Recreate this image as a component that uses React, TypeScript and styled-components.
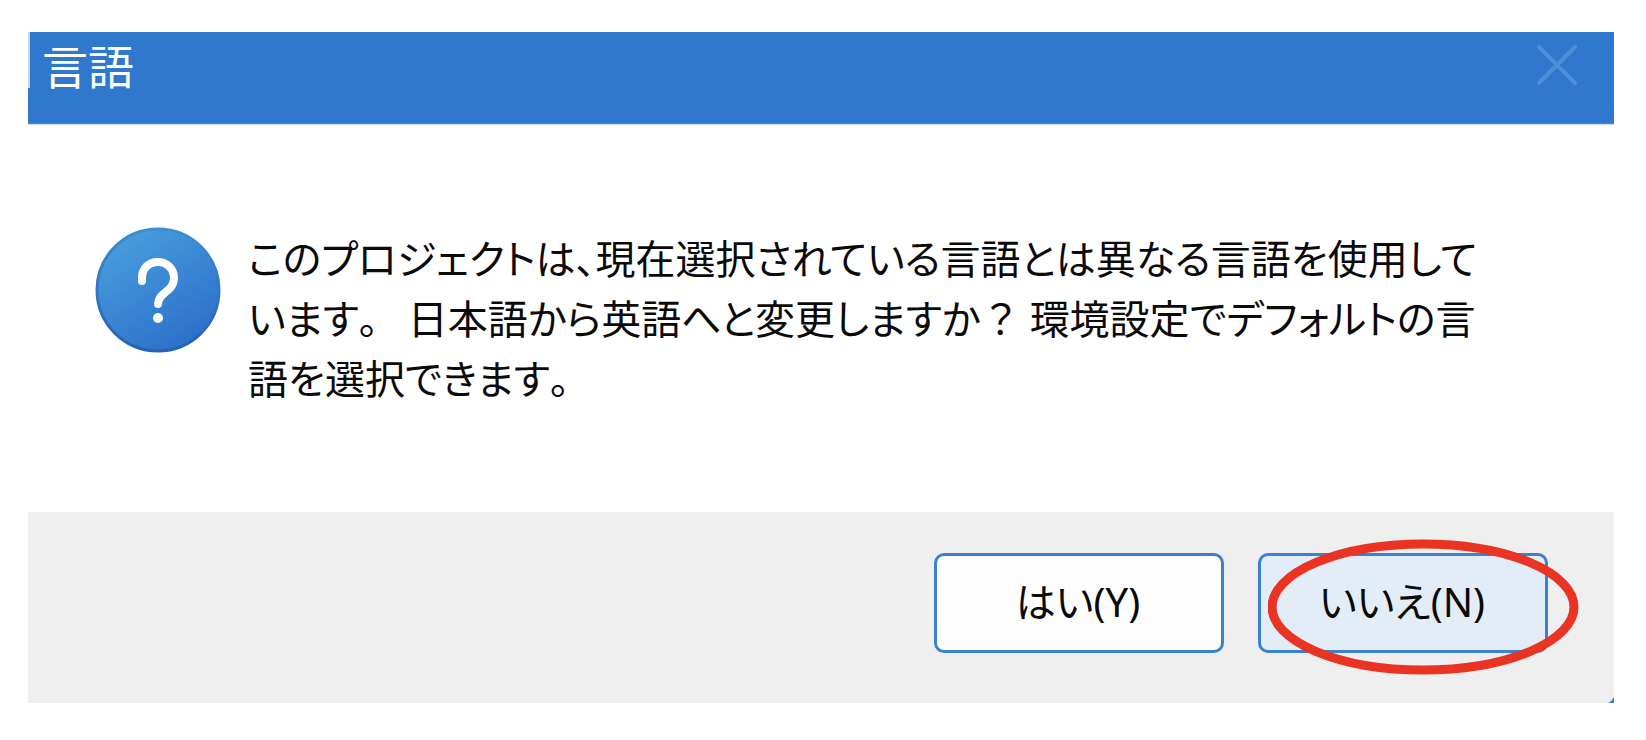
import React from "react";
import styled, { createGlobalStyle } from "styled-components";

const GlobalStyle = createGlobalStyle`
  * { box-sizing: border-box; }
  body {
    margin: 0;
    background: #ffffff;
    color: #0a0a0a;
    font-family: "Noto Sans CJK JP", sans-serif;
    font-feature-settings: "palt";
  }
`;

const Page = styled.main`
  padding: 32px 32px 36px 28px;
`;

const Dialog = styled.section`
  display: flex;
  flex-direction: column;
  background: #ffffff;
`;

const TitleBar = styled.header`
  position: relative;
  display: flex;
  justify-content: space-between;
  align-items: flex-start;
  height: 92px;
  padding: 0 32px 0 14px;
  background: #3078ce;
  border-bottom: 1px solid #4585d2;
  box-shadow: 0 1px 0 #c8def4;

  &::before {
    content: "";
    position: absolute;
    left: 0;
    top: 0;
    width: 2px;
    height: 56px;
    background: #c3daf3;
  }
`;

const Title = styled.h1`
  margin: 0;
  font-size: 46px;
  line-height: 64px;
  font-weight: 400;
  color: #ffffff;
`;

const CloseButton = styled.button`
  display: flex;
  padding: 8px 0 0;
  border: 0;
  background: none;
  cursor: pointer;
`;

const Content = styled.div`
  display: flex;
  align-items: flex-start;
  gap: 27px;
  padding: 103px 100px 105px 67px;
`;

const IconSlot = styled.div`
  flex: none;
  display: flex;
`;

const Message = styled.p`
  margin: 0;
  font-size: 40px;
  line-height: 60px;
  white-space: nowrap;
`;

const FullWidth = styled.span`
  font-feature-settings: normal;
`;

const Footer = styled.footer`
  position: relative;
  display: flex;
  justify-content: flex-end;
  gap: 34px;
  padding: 41px 66px 50px;
  background: #efefef;
`;

const Slot = styled.div`
  position: relative;
  display: flex;
`;

const Choice = styled.button<{ $active?: boolean }>`
  width: 290px;
  height: 100px;
  padding: 0 2px 2px 0;
  border: 3px solid #3a82cf;
  border-radius: 10px;
  background: ${(p) => (p.$active ? "#e3edf7" : "#fdfdfd")};
  color: inherit;
  font-family: "Noto Sans", "Noto Sans CJK JP", sans-serif;
  font-feature-settings: "palt";
  font-size: 40px;
  line-height: 60px;
  cursor: pointer;
`;

const Marker = styled.svg`
  position: absolute;
  left: 10px;
  top: -14px;
  pointer-events: none;
`;

const Corner = styled.svg`
  position: absolute;
  right: 0;
  bottom: 0;
`;

export default function App() {
  return (
    <>
      <GlobalStyle />
      <Page>
        <Dialog role="dialog" aria-labelledby="title" aria-describedby="message">
          <TitleBar>
            <Title id="title">言語</Title>
            <CloseButton type="button" aria-label="閉じる">
              <svg width="50" height="50" viewBox="0 0 50 50">
                <path d="M7 7 43 43M43 7 7 43" stroke="#4a90d8" strokeWidth="4" strokeLinecap="round" />
              </svg>
            </CloseButton>
          </TitleBar>
          <Content>
            <IconSlot>
              <svg width="126" height="126" viewBox="0 0 126 126" aria-hidden="true">
                <defs>
                  <linearGradient id="disc" x1="0.2" y1="0.1" x2="0.75" y2="0.95">
                    <stop offset="0" stopColor="#479bdc" />
                    <stop offset="1" stopColor="#2c70ca" />
                  </linearGradient>
                  <linearGradient id="rim" x1="0" y1="0" x2="0" y2="1">
                    <stop offset="0" stopColor="#3d8dd2" />
                    <stop offset="1" stopColor="#2561b4" />
                  </linearGradient>
                </defs>
                <circle cx="63" cy="63" r="61" fill="url(#disc)" stroke="url(#rim)" strokeWidth="3" />
                <path
                  d="M47 54V51C47 41 54 35 63 35C72 35 79 42 79 51C79 65 63 65 63 77"
                  fill="none"
                  stroke="#ffffff"
                  strokeWidth="8"
                  strokeLinecap="round"
                />
                <circle cx="63" cy="91" r="5" fill="#ffffff" />
              </svg>
            </IconSlot>
            <Message id="message">
              このプロジェクトは、現在選択されている言語とは異なる言語を使用して
              <br />
              います<FullWidth>。</FullWidth> 日本語から英語へと変更しますか<FullWidth>？</FullWidth>{" "}
              環境設定でデフォルトの言
              <br />
              語を選択できます<FullWidth>。</FullWidth>
            </Message>
          </Content>
          <Footer>
            <Slot>
              <Choice type="button">はい(Y)</Choice>
            </Slot>
            <Slot>
              <Choice type="button" $active>いいえ(N)</Choice>
              <Marker width="311" height="136" viewBox="0 0 311 136" aria-hidden="true">
                <ellipse cx="155" cy="68" rx="151" ry="63" fill="none" stroke="#e93323" strokeWidth="9" />
              </Marker>
            </Slot>
            <Corner width="7" height="6" viewBox="0 0 7 6" aria-hidden="true">
              <path d="M7 0V6H1Q5 4 7 0Z" fill="#3a82cf" />
            </Corner>
          </Footer>
        </Dialog>
      </Page>
    </>
  );
}
